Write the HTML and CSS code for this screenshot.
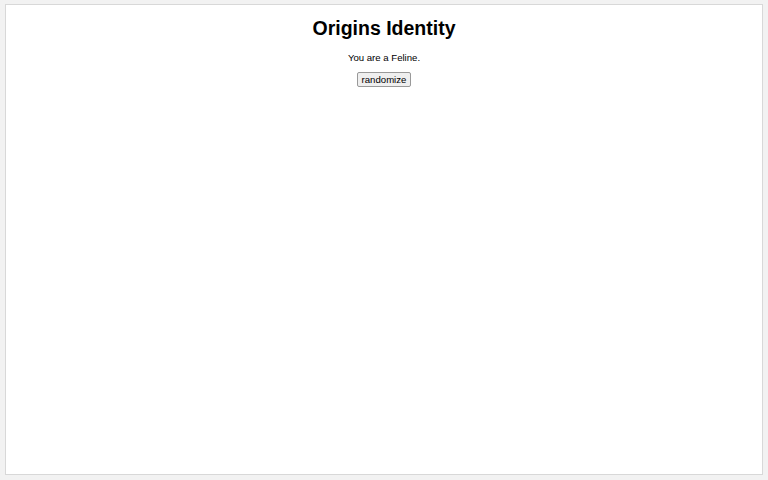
FILE: index.html
```html
<!DOCTYPE html>
<html>
<head>
<meta charset="utf-8">
<link rel="stylesheet" href="styles.css">
</head>
<body>
<div class="panel">
  <h1 class="title">Origins Identity</h1>
  <p class="result">You are a Feline.</p>
  <button class="btn">randomize</button>
</div>
</body>
</html>
```
FILE: styles.css
```css
html, body { margin: 0; padding: 0; }
body {
  background: #f2f2f2;
  font-family: "Liberation Sans", Arial, sans-serif;
  padding: 4px 5px 5px 5px;
  height: 480px;
  box-sizing: border-box;
}
.panel {
  background: #fff;
  border: 1px solid #d8d8d8;
  height: 100%;
  box-sizing: border-box;
  display: flex;
  flex-direction: column;
  align-items: center;
  padding-top: 12px;
}
.title {
  margin: 0;
  font-size: 19.5px;
  font-weight: bold;
  color: #000;
  line-height: 23px;
}
.result {
  margin: 12px 0 0 0;
  font-size: 9.6px;
  line-height: 12px;
  color: #000;
}
.btn {
  margin-top: 8px;
  font-family: "Liberation Sans", Arial, sans-serif;
  font-size: 9.6px;
  padding: 1px 4px;
  background: #efefef;
  border: 1px solid #999;
  border-radius: 2px;
  color: #000;
}
```
